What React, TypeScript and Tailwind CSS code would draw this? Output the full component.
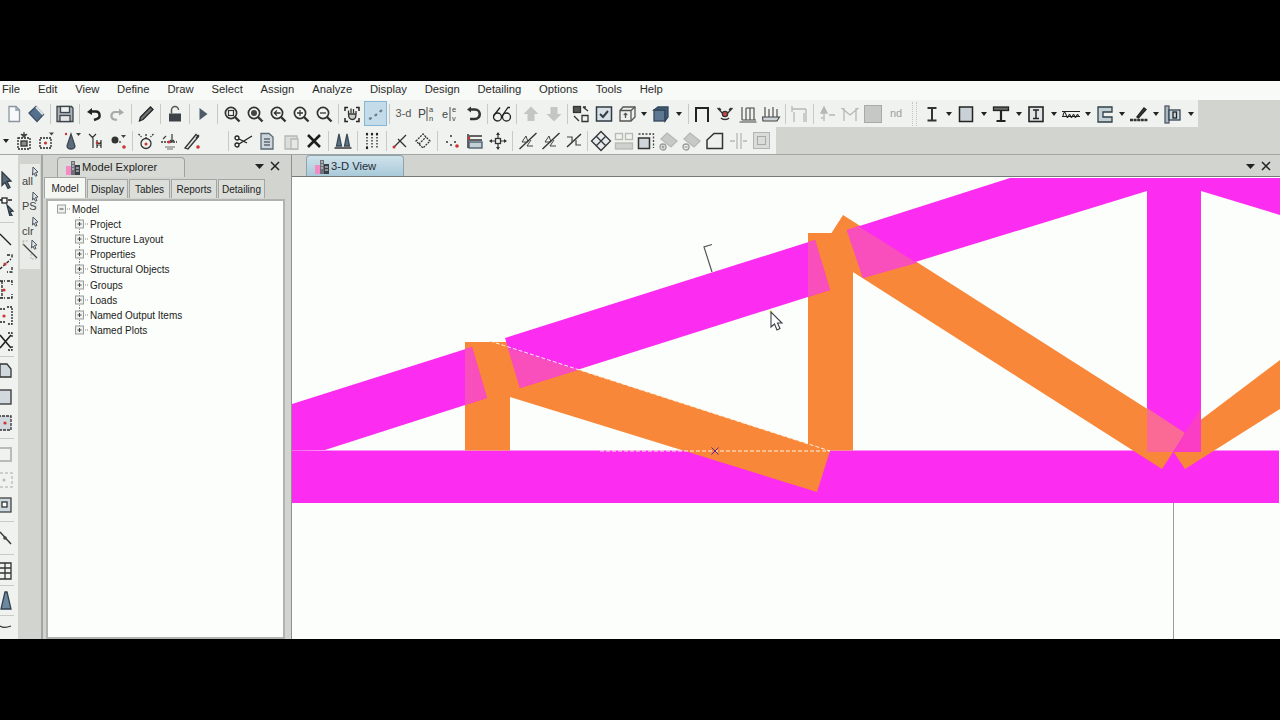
import React from "react";

const F = "font-['Liberation_Sans',Arial,sans-serif]";

const I = ({ children, w = 20, h = 20 }: { children: React.ReactNode; w?: number; h?: number }) => (
  <svg width={w} height={h} viewBox={`0 0 ${w} ${h}`} fill="none" stroke="#333" strokeWidth="1.3" className="block shrink-0">
    {children}
  </svg>
);

const Cell = ({ w, children }: { w: string; children?: React.ReactNode }) => (
  <span className={"flex h-full shrink-0 items-center justify-center " + w}>{children}</span>
);
const Sep = ({ w }: { w: string }) => (
  <span className={"flex h-full shrink-0 items-center justify-center " + w}>
    <span className="h-[20px] w-px bg-[#c6c9c4]" />
  </span>
);
const DD = () => (
  <svg width="6" height="4" viewBox="0 0 6 4" className="block">
    <path d="M0 0h6L3 4z" fill="#222" />
  </svg>
);

const Zoom = ({ kind }: { kind: string }) => (
  <I>
    <circle cx="9" cy="9" r="5.6" strokeWidth="1.7" fill="#f4f6f2" />
    <path d="M13 13l4.5 4.5" strokeWidth="2.4" />
    {kind === "win" && <rect x="6.5" y="6.5" width="5" height="5" strokeWidth="1.2" />}
    {kind === "dot" && <circle cx="9" cy="9" r="3" fill="#444" stroke="none" />}
    {kind === "back" && <path d="M12.5 9h-6M9 6.4L6.3 9 9 11.6" strokeWidth="1.3" />}
    {kind === "plus" && <path d="M6 9h6M9 6v6" strokeWidth="1.3" />}
    {kind === "minus" && <path d="M6 9h6" strokeWidth="1.3" />}
  </I>
);

const Gray = "#b5b8b3";

const Row1 = () => (
  <div className="flex h-[27px] w-[1198px] items-center bg-[#eff2ee]">
    <Cell w="w-[3px]" />
    <Cell w="w-[22px]"><I><path d="M5 2.500h7l3.500 3.500v11.500H5z" fill="#f7f8fa" stroke="#8b95a0" /><path d="M12 2.500V6h3.500" stroke="#8b95a0" /></I></Cell>
    <Cell w="w-[22px]"><I><path d="M3 9l7-6.500 7.500 8-6.500 7z" fill="#54708f" stroke="#3d4f63" /><path d="M10 3l7 7.500" stroke="#dfe4e8" strokeWidth="2" /></I></Cell>
    <Sep w="w-[7px]" />
    <Cell w="w-[22px]"><I w={20}><path d="M2 2.500h14.500L18 4v13.500H2z" fill="#a9b2b8" stroke="#3d444a" /><rect x="5.500" y="2.500" width="9" height="6" fill="#eef0f0" stroke="#3d444a" /><rect x="5" y="11.500" width="10" height="6" fill="#e4e6e6" stroke="#3d444a" /></I></Cell>
    <Sep w="w-[7px]" />
    <Cell w="w-[22px]"><I><path d="M6 7.500h6a3.800 3.800 0 0 1 1 7.400L10 16" stroke="#222" strokeWidth="2.400" /><path d="M3 8l5-4v7z" fill="#222" stroke="none" /></I></Cell>
    <Cell w="w-[23px]"><I><path d="M14 8H8a3.800 3.800 0 0 0-1 7.400l3 .600" stroke="#a8aca8" strokeWidth="2.200" /><path d="M17 8.500l-5-4v7z" fill="#a8aca8" stroke="none" /></I></Cell>
    <Sep w="w-[7px]" />
    <Cell w="w-[22px]"><I><path d="M3.500 17l1-4L14.500 3l2.500 2.500-10 10z" fill="#6d7478" stroke="#222" /></I></Cell>
    <Sep w="w-[7px]" />
    <Cell w="w-[22px]"><I><rect x="4" y="9.500" width="12" height="8" fill="#3c4247" stroke="none" /><path d="M6.500 9.500V6a3.500 3.500 0 0 1 7 0" strokeWidth="1.500" stroke="#555" /></I></Cell>
    <Sep w="w-[6px]" />
    <Cell w="w-[22px]"><I><path d="M6.500 4l8 6-8 6z" fill="#4f5c68" stroke="none" /></I></Cell>
    <Sep w="w-[7px]" />
    <Cell w="w-[22px]"><Zoom kind="win" /></Cell>
    <Cell w="w-[23px]"><Zoom kind="dot" /></Cell>
    <Cell w="w-[23px]"><Zoom kind="back" /></Cell>
    <Cell w="w-[23px]"><Zoom kind="plus" /></Cell>
    <Cell w="w-[23px]"><Zoom kind="minus" /></Cell>
    <Sep w="w-[6px]" />
    <Cell w="w-[22px]"><I><path d="M3 7V3.500h3M17 7V3.500h-3M3 14v3.500h3M17 14v3.500h-3" strokeWidth="1.500" stroke="#222" /><path d="M6.500 10V6.500M9 9V4.500M11.500 9V5M14 10V7M6.500 10c0 4 2 5.500 4 5.500s3.500-2 3.500-5.500z" fill="#c9ccc8" strokeWidth="1.300" /></I></Cell>
    <Cell w="w-[1px]" />
    <Cell w="w-[23px]">
      <span className="flex h-[25px] w-[23px] items-center justify-center border border-[#86b7d6] bg-[#c4dbea]">
        <I><path d="M3 14.500c1.500-1.500 3-1 2.500 0s-2 1.500-2.500 0zM8.500 11c1.500-1.500 3-1 2.500 0s-2 1.500-2.500 0zM13.500 7c1.500-1.500 3-1 2.500 0s-2 1.500-2.500 0z" fill="#6a7d88" stroke="#6a7d88" strokeWidth="1" /></I>
      </span>
    </Cell>
    <Sep w="w-[5px]" />
    <Cell w="w-[23px]"><span className="text-[11px] text-[#555]">3-d</span></Cell>
    <Cell w="w-[24px]"><I><text x="1" y="14" fontSize="12" fill="#444" stroke="none">P</text><path d="M10 3v14" strokeWidth="1" stroke="#555" /><text x="12" y="8" fontSize="7.500" fill="#444" stroke="none">a</text><text x="12" y="17" fontSize="7.500" fill="#444" stroke="none">n</text></I></Cell>
    <Cell w="w-[23px]"><I><text x="1" y="14" fontSize="11" fill="#444" stroke="none">e</text><path d="M9 3v14" strokeWidth="1" stroke="#555" /><text x="11" y="8" fontSize="7.500" fill="#444" stroke="none">e</text><text x="11" y="17" fontSize="7.500" fill="#444" stroke="none">v</text></I></Cell>
    <Cell w="w-[23px]"><I><path d="M6 5.500h5a4.700 4.700 0 1 1 0 9.500H6" strokeWidth="2.600" stroke="#333" /><path d="M3 5.500l4-3v6z" fill="#333" stroke="none" /></I></Cell>
    <Sep w="w-[5px]" />
    <Cell w="w-[23px]"><I><circle cx="5.500" cy="13" r="4" stroke="#222" /><circle cx="14.500" cy="13" r="4" stroke="#222" /><path d="M1.500 12L8 3.500M10 12l6-8.500h2" stroke="#222" /></I></Cell>
    <Sep w="w-[7px]" />
    <Cell w="w-[22px]"><I><path d="M10 2.500l7.500 7.500H13.500v7h-7v-7H2.500z" fill="#c3c6c2" stroke="none" /></I></Cell>
    <Cell w="w-[23px]"><I><path d="M10 17.500L2.500 10H6.500V3h7v7h4z" fill="#c3c6c2" stroke="none" /></I></Cell>
    <Sep w="w-[5px]" />
    <Cell w="w-[22px]"><I><rect x="2.500" y="2.500" width="7" height="6" fill="#555" stroke="#333" /><path d="M12 3l5 4M12 3h3M3 12l5 5M11 11.500h6v6h-6z" /></I></Cell>
    <Cell w="w-[24px]"><I><rect x="2.500" y="3" width="15" height="14" fill="#d8e0e6" stroke="#2e3a44" strokeWidth="1.500" /><path d="M6 10l3 3 5-6" strokeWidth="2" stroke="#2e3a44" /></I></Cell>
    <Cell w="w-[22px]"><I><path d="M3 6.500L6 3h12v10l-4 4H3z" fill="#eef0ee" stroke="#555" /><path d="M3 6.500h11V17M14 6.500L18 3M8.500 14V9.500M6.800 11l1.700-1.700 1.700 1.700" stroke="#555" /></I></Cell>
    <Cell w="w-[12px]"><DD /></Cell>
    <Cell w="w-[22px]"><I><rect x="3" y="6" width="11" height="11" fill="#5c7892" stroke="#34475a" /><path d="M3 6l4-3h10v10l-3 4V6z" fill="#3f5c78" stroke="#34475a" /></I></Cell>
    <Cell w="w-[14px]"><DD /></Cell>
    <Sep w="w-[5px]" />
    <Cell w="w-[22px]"><I><path d="M4 18V4h12v14" strokeWidth="2" stroke="#222" /></I></Cell>
    <Cell w="w-[23px]"><I><path d="M2.500 4L10 12l7.500-8M4 4l2 2M16 4l-2 2" stroke="#333" /><circle cx="10" cy="10" r="2.600" fill="#c64a4a" stroke="#333" /><path d="M6 14c1.500 2 6.500 2 8 0" /></I></Cell>
    <Cell w="w-[23px]"><I><path d="M4 3v13M4 16h14M8 4h8v12M8 4v12M12 4v12M1.500 18h17" stroke="#444" strokeWidth="1.100" /></I></Cell>
    <Cell w="w-[23px]"><I><path d="M4 3v10M8 5v8M12 3v10M16 5v8M1.500 13h17L16 17H2z" stroke="#444" strokeWidth="1.100" fill="#cdd4da" /></I></Cell>
    <Sep w="w-[6px]" />
    <Cell w="w-[22px]"><I><path d="M3 5h14M3 2v6M17 5v13M5 8v10M15 9v9" stroke={Gray} /></I></Cell>
    <Sep w="w-[6px]" />
    <Cell w="w-[22px]"><I><path d="M7 3l3 6H4zM7 9v8" stroke={Gray} fill={Gray} /><path d="M12 11h6M4 14h2" stroke={Gray} /></I></Cell>
    <Cell w="w-[23px]"><I><path d="M1.500 4l8.500 7 8.500-7M4 4v13M16 4v13" stroke={Gray} /></I></Cell>
    <Cell w="w-[24px]"><span className="h-[18px] w-[18px] border border-[#a8aaa7] bg-[#c5c8c4]" /></Cell>
    <Cell w="w-[22px]"><span className="text-[11px] text-[#9c9f9b]">nd</span></Cell>
    <Cell w="w-[14px]"><span className="h-[24px] w-[5px] border-x border-dotted border-[#c4c6c2]" /></Cell>
    <Cell w="w-[22px]"><I><path d="M5.500 4h9M5.500 16.500h9M10 4v12.500" stroke="#333" strokeWidth="2" /></I></Cell>
    <Cell w="w-[12px]"><DD /></Cell>
    <Cell w="w-[22px]"><I><rect x="3.500" y="3" width="13" height="14.500" fill="#c9d1d6" stroke="#222" strokeWidth="1.500" /></I></Cell>
    <Cell w="w-[13px]"><DD /></Cell>
    <Cell w="w-[22px]"><I><rect x="2.500" y="3" width="15" height="3.500" fill="#666" stroke="#222" /><path d="M10 6.500v10M5.500 17h9" strokeWidth="2.200" stroke="#222" /></I></Cell>
    <Cell w="w-[13px]"><DD /></Cell>
    <Cell w="w-[22px]"><I><rect x="3" y="3" width="14" height="14.500" fill="#dfe4e6" stroke="#222" strokeWidth="1.600" /><path d="M7 6h6M7 14.500h6M10 6v8.500" strokeWidth="1.500" stroke="#222" /></I></Cell>
    <Cell w="w-[13px]"><DD /></Cell>
    <Cell w="w-[22px]"><I><path d="M1 7.500h18M1 12.500h18M2 12c1-5 2-5 3.500 0s2.500-5 4 0 2.500-5 4 0 2.500-5 4 0" strokeWidth="1.100" stroke="#222" /></I></Cell>
    <Cell w="w-[11px]"><DD /></Cell>
    <Cell w="w-[23px]"><I><path d="M3 3h14v5h-9v5h9v5H3z" fill="#c4d0d4" stroke="#2c4048" strokeWidth="1.300" /></I></Cell>
    <Cell w="w-[12px]"><DD /></Cell>
    <Cell w="w-[21px]"><I><path d="M8 13L15 4l2 1.500L9.500 14z" fill="#444" stroke="#222" /><path d="M1 16h18" strokeWidth="2.400" stroke="#333" strokeDasharray="3 .6" /></I></Cell>
    <Cell w="w-[13px]"><DD /></Cell>
    <Cell w="w-[22px]"><I><rect x="2" y="2" width="4" height="17" fill="#a8b8c0" stroke="#556" /><rect x="6" y="6" width="11" height="10" fill="#c9d6dc" stroke="#345" /><rect x="10" y="8" width="3.500" height="6" stroke="#222" /></I></Cell>
    <Cell w="w-[13px]"><DD /></Cell>
  </div>
);

const Row2 = () => (
  <div className="flex h-[27px] w-[776px] items-center bg-[#eff2ee]">
    <Cell w="w-[12px]"><DD /></Cell>
    <Cell w="w-[23px]"><I><rect x="4" y="7" width="12" height="11" stroke="#222" strokeDasharray="2 1" /><rect x="7" y="10" width="6" height="5" fill="#8a8f8a" stroke="#333" /><path d="M10 1v3M7 3l3 3 3-3" fill="#444" stroke="#444" /></I></Cell>
    <Cell w="w-[24px]"><I><rect x="3" y="7" width="11" height="10" strokeDasharray="2 1" stroke="#222" /><circle cx="8.500" cy="12" r="1.600" fill="#c33" stroke="none" /><path d="M12 1.500l2.500 3 2.500-3z" fill="#444" stroke="none" /></I></Cell>
    <Cell w="w-[25px]"><I><path d="M9 3L5 15a4 3 0 0 0 8 0z" fill="#5c6c7c" stroke="#3c4650" /><path d="M14 2l2.500 3 2.500-3z" fill="#444" stroke="none" /><circle cx="4" cy="3" r="1.200" fill="#c33" stroke="none" /></I></Cell>
    <Cell w="w-[23px]"><I><path d="M3 3l4 4M10 3l-4 4M7 7v10M11 9v8M15 9v8M11 11l4 4M15 11l-4 4" stroke="#333" strokeWidth="1.200" /><circle cx="11" cy="12" r="1.300" fill="#c33" stroke="none" /></I></Cell>
    <Cell w="w-[23px]"><I><circle cx="6" cy="9" r="3.500" fill="#333" stroke="none" /><path d="M12 4l2.500 3L17 4z" fill="#444" stroke="none" /><circle cx="15" cy="16" r="1.800" fill="#c33" stroke="none" /><circle cx="11" cy="11" r="1" fill="#555" stroke="none" /></I></Cell>
    <Sep w="w-[5px]" />
    <Cell w="w-[22px]"><I><circle cx="10" cy="12.500" r="5" stroke="#333" /><circle cx="10" cy="13" r="1.500" fill="#c33" stroke="none" /><path d="M2.500 3l3 3M17.500 3l-3 3M10 3v5" stroke="#333" strokeDasharray="2 1" /></I></Cell>
    <Cell w="w-[24px]"><I><path d="M2 11h16" strokeDasharray="2 1" stroke="#333" /><path d="M4 8l3-3M13 3v8M11 9l2 2 2-2" stroke="#444" /><circle cx="10" cy="11" r="1.500" fill="#c33" stroke="none" /><path d="M6 16h10M8 18h6" stroke="#999" /></I></Cell>
    <Cell w="w-[22px]"><I><path d="M3 17L14 3.500l2.500 2L6 18z" fill="#dfe3e6" stroke="#333" /><circle cx="16" cy="16" r="1.800" fill="#c33" stroke="none" /><path d="M14 7l3-3" stroke="#333" /></I></Cell>
    <Cell w="w-[22px]" />
    <Sep w="w-[7px]" />
    <Cell w="w-[22px]"><I><circle cx="4" cy="14" r="2" stroke="#222" /><circle cx="4" cy="7" r="2" stroke="#222" /><path d="M6 13L19 5M6 8l8 4" stroke="#222" /></I></Cell>
    <Cell w="w-[25px]"><I><path d="M4 2.500h8l4 3.500v12H4z" fill="#ced6dc" stroke="#5b6a75" /><path d="M7 8h6M7 11h6M7 14h6" stroke="#5b6a75" /></I></Cell>
    <Cell w="w-[24px]"><I><path d="M4 5h12v13H4z" fill="#dcdedb" stroke={Gray} /><path d="M10 8h7v10h-7z" fill="#e6e8e5" stroke={Gray} /></I></Cell>
    <Cell w="w-[22px]"><I><path d="M4 4l12 12M16 4L4 16" strokeWidth="2.600" stroke="#1d1d1d" /></I></Cell>
    <Sep w="w-[7px]" />
    <Cell w="w-[22px]"><I><path d="M6 3L3.500 15h5zM14 3l-2.500 12h5z" fill="#5d7486" stroke="#3a4a56" /><path d="M1.500 17h17" stroke="#333" strokeWidth="1.500" /></I></Cell>
    <Sep w="w-[6px]" />
    <Cell w="w-[23px]"><I><path d="M5 3v14M10 3v14M15 3v14" strokeDasharray="1.500 1.500" stroke="#222" /><circle cx="5" cy="3" r="1.200" fill="#222" stroke="none" /><circle cx="5" cy="17" r="1.200" fill="#222" stroke="none" /><circle cx="10" cy="3" r="1.200" fill="#222" stroke="none" /><circle cx="15" cy="3" r="1.200" fill="#222" stroke="none" /></I></Cell>
    <Sep w="w-[6px]" />
    <Cell w="w-[22px]"><I><path d="M4 16L16 4M16 16L8 8" stroke="#333" /><circle cx="4" cy="16" r="1.500" fill="#c33" stroke="none" /></I></Cell>
    <Cell w="w-[24px]"><I><path d="M3 10l7-7 7 7-7 7zM6 13l7-7" stroke="#333" strokeDasharray="2 1" /></I></Cell>
    <Sep w="w-[5px]" />
    <Cell w="w-[23px]"><I><circle cx="9" cy="5" r="1" fill="#333" stroke="none" /><circle cx="5" cy="11" r="1" fill="#333" stroke="none" /><circle cx="13" cy="11" r="1" fill="#333" stroke="none" /><circle cx="15" cy="15" r="1.800" fill="#c33" stroke="none" /><circle cx="9" cy="14" r="1" fill="#333" stroke="none" /></I></Cell>
    <Cell w="w-[23px]"><I><path d="M3 3v14" stroke="#333" strokeWidth="1.500" /><circle cx="4" cy="7" r="1.300" fill="#c33" stroke="none" /><path d="M4 5h13M4 9h13" stroke="#333" /><rect x="4" y="11" width="13" height="6" fill="#c5d0d6" stroke="#456" /></I></Cell>
    <Cell w="w-[23px]"><I><path d="M10 2v16M2 10h16" stroke="#333" strokeWidth="1.200" /><rect x="7.500" y="7.500" width="5" height="5" fill="#eff2ee" stroke="#333" /><path d="M10 1l2 3H8zM10 19l2-3H8zM1 10l3-2v4zM19 10l-3-2v4z" fill="#333" stroke="none" /></I></Cell>
    <Sep w="w-[7px]" />
    <Cell w="w-[23px]"><I><path d="M1.500 18L18.500 2" stroke="#333" /><path d="M8 5l-4 6h6zM13 9l-4 6h6" stroke="#444" strokeWidth="1" /></I></Cell>
    <Cell w="w-[23px]"><I><path d="M1.500 18L18.500 2" stroke="#333" /><path d="M8 5l-4 6h6zM13 9l-4 6h6" stroke="#444" strokeWidth="1" /></I></Cell>
    <Cell w="w-[23px]"><I><path d="M3 16L17 3" stroke="#333" strokeWidth="1.500" /><path d="M3 6h5v5M17 14h-5V9" stroke="#444" strokeWidth="1.200" /></I></Cell>
    <Sep w="w-[4px]" />
    <Cell w="w-[23px]"><I w={22} h={22}><path d="M11 1.500L20.500 11 11 20.500 1.500 11zM6 6l10 10M16 6L6 16" stroke="#333" fill="#e4eaee" /></I></Cell>
    <Cell w="w-[23px]"><I><rect x="1.500" y="2.500" width="7" height="6" stroke={Gray} /><rect x="11.500" y="2.500" width="7" height="6" stroke={Gray} /><rect x="1.500" y="12" width="17" height="6" stroke={Gray} fill="#ced1cd" /></I></Cell>
    <Cell w="w-[22px]"><I><rect x="2.500" y="7" width="11" height="10.500" fill="#cfd5d8" stroke="#333" strokeWidth="1.500" /><path d="M2.500 3h15v14" stroke="#444" strokeDasharray="2 1.500" /></I></Cell>
    <Cell w="w-[23px]"><I><path d="M8 2l10 8-6 6-10-8z" fill="#c6c9c5" stroke={Gray} /><circle cx="4" cy="16" r="3" fill="#eff2ee" stroke="#9a9d99" /><path d="M2.500 16h3M4 14.500v3" stroke="#9a9d99" /></I></Cell>
    <Cell w="w-[23px]"><I><path d="M8 2l10 8-6 6-10-8z" fill="#c6c9c5" stroke={Gray} /><circle cx="4" cy="16" r="3" fill="#eff2ee" stroke="#9a9d99" /><path d="M2.500 16h3" stroke="#9a9d99" /></I></Cell>
    <Cell w="w-[23px]"><I><path d="M2 9l7-6.500h8.500v15H2z" fill="#eef0ee" stroke="#333" strokeWidth="1.500" /></I></Cell>
    <Cell w="w-[23px]"><I><path d="M9 2v16M13 2v16M2 10h5M15 10h4" stroke={Gray} /></I></Cell>
    <Cell w="w-[24px]"><span className="flex h-[17px] w-[17px] items-center justify-center border border-[#b1b4b0] bg-[#d9dcd8]"><span className="h-[9px] w-[9px] border border-[#a6a9a5]" /></span></Cell>
  </div>
);

const menus = ["File", "Edit", "View", "Define", "Draw", "Select", "Assign", "Analyze", "Display", "Design", "Detailing", "Options", "Tools", "Help"];
const tree = ["Project", "Structure Layout", "Properties", "Structural Objects", "Groups", "Loads", "Named Output Items", "Named Plots"];

const BuildIcon = () => (
  <svg width="15" height="15" viewBox="0 0 15 15" className="block shrink-0">
    <rect x="0" y="6" width="5" height="9" fill="#f48bc4" />
    <rect x="5" y="1" width="4" height="14" fill="#6b7079" />
    <rect x="9" y="5" width="5" height="10" fill="#3c4048" />
    <path d="M6 3h2M6 6h2M6 9h2M10 8h3M10 11h3" stroke="#e8e8e8" strokeWidth="1" />
  </svg>
);
const Close = () => (
  <svg width="10" height="10" viewBox="0 0 10 10" className="block"><path d="M1 1l8 8M9 1L1 9" stroke="#222" strokeWidth="1.500" /></svg>
);
const Tri = () => (
  <svg width="9" height="5" viewBox="0 0 9 5" className="block"><path d="M0 0h9L4.500 5z" fill="#222" /></svg>
);

const SI = ({ children, h = "h-[25px]" }: { children: React.ReactNode; h?: string }) => (
  <div className={"flex w-full shrink-0 items-center overflow-hidden " + h}>
    <svg width="18" height="20" viewBox="0 0 18 20" fill="none" stroke="#333" strokeWidth="1.300" className="block shrink-0">{children}</svg>
  </div>
);
const HSep = ({ m }: { m: string }) => <div className={"h-px w-[14px] shrink-0 bg-[#c8cbc6] " + m} />;

const LeftStrip = () => (
  <div className="flex h-full w-[18px] shrink-0 flex-col overflow-hidden bg-[#eff2ee] pt-[13px]">
    <SI><path d="M2 1l9 9-4 .500 3 6-2 1-3-6-3 3z" fill="#5a6a7a" stroke="#2f3a44" /></SI>
    <SI><path d="M0 4h2M8 4h4" stroke="#222" /><rect x="2" y="2" width="5" height="5" stroke="#222" fill="#fff" /><path d="M7 9l6 6-3 .500 2 4-2 1z" fill="#5a6a7a" stroke="#2f3a44" /></SI>
    <HSep m="my-[4px]" />
    <SI h="h-[23px]"><path d="M0 5l11 11" stroke="#222" /></SI>
    <SI h="h-[27px]"><path d="M7 1h5v4M12 13v5H7M0 15l11-10" stroke="#222" strokeDasharray="3 1.500" /><circle cx="5" cy="10" r="1.600" fill="#c33" stroke="none" /></SI>
    <SI h="h-[26px]"><path d="M0 1h5M0 18h5M2 1v17M7 1h5v4M7 18h5v-4" stroke="#222" strokeDasharray="3 1" /><circle cx="4" cy="10" r="1.600" fill="#c33" stroke="none" /></SI>
    <SI h="h-[26px]"><path d="M7 1h5v17H7M0 3h5M0 16h5" stroke="#222" strokeDasharray="2 1" /><circle cx="4" cy="10" r="1.600" fill="#c33" stroke="none" /></SI>
    <SI h="h-[26px]"><path d="M0 3l11 13M11 3L0 16" stroke="#222" strokeWidth="1.600" /><path d="M8 1h4v4M8 18h4v-4" stroke="#222" strokeDasharray="2 1" /></SI>
    <HSep m="my-[1px]" />
    <SI h="h-[26px]"><path d="M0 3h7l4 5v8H0z" fill="#d2d9de" stroke="#333" /></SI>
    <SI h="h-[26px]"><rect x="-2" y="3" width="13" height="14" fill="#d2d9de" stroke="#333" /></SI>
    <SI h="h-[25px]"><rect x="-2" y="3" width="13" height="14" fill="#d2d9de" stroke="#333" strokeDasharray="3 1" /><circle cx="5" cy="10" r="1.600" fill="#c33" stroke="none" /></SI>
    <HSep m="my-[3px]" />
    <SI h="h-[26px]"><path d="M0 3h11v13H0" stroke="#b8bbb6" strokeWidth="2" /></SI>
    <SI h="h-[24px]"><path d="M0 3h12v14H0" stroke="#c0c3be" strokeDasharray="3 2" strokeWidth="1.500" /><circle cx="4" cy="10" r="1.500" fill="#b8bbb6" stroke="none" /></SI>
    <SI h="h-[26px]"><rect x="-2" y="3" width="13" height="14" fill="#cdd7de" stroke="#444" /><rect x="2" y="7" width="5" height="5" fill="#fff" stroke="#333" /></SI>
    <HSep m="my-[3px]" />
    <SI h="h-[27px]"><path d="M0 3l11 12" stroke="#333" strokeWidth="1.400" /><circle cx="5" cy="9" r="1.800" fill="#444" stroke="none" /></SI>
    <HSep m="my-[2px]" />
    <SI h="h-[27px]"><path d="M0 2h11v16H0M0 7h11M0 12h11M5 2v16" stroke="#333" /></SI>
    <HSep m="my-[1px]" />
    <SI h="h-[27px]"><path d="M5 1L1 18h10L7 1z" fill="#6b8aa0" stroke="#33424f" /></SI>
    <HSep m="my-[1px]" />
    <SI h="h-[20px]"><path d="M0 9c3 2 6 2 11 0" stroke="#333" /></SI>
  </div>
);

const Cur = () => <path d="M11 1l5 5-2.500 .500 1.500 3-1.500 .700-1.500-3-1.500 2z" fill="#dfe3e6" stroke="#4a5560" strokeWidth="1" />;

const Strip2 = () => (
  <div className="mt-[9px] flex h-[105px] w-[20px] flex-col items-center bg-[#e8ebe6]">
    {["all", "PS", "clr"].map((t) => (
      <div key={t} className="relative h-[25px] w-full pt-[9px]">
        <span className="block pl-[2px] text-[11px] leading-[16px] text-[#444]">{t}</span>
        <svg width="18" height="14" viewBox="0 0 18 14" fill="none" className="absolute left-[2px] top-[2px]"><Cur /></svg>
      </div>
    ))}
    <svg width="18" height="22" viewBox="0 0 18 22" fill="none" className="block">
      <path d="M2 5l14 14" stroke="#444" strokeWidth="1.300" />
      <path d="M2 2h6M2 2v6M10 15v5h5" stroke="#aaa" strokeDasharray="1.500 1.500" />
      <Cur />
    </svg>
  </div>
);

const Tree = () => (
  <div className="flex-1 border-2 border-[#b0b3af] bg-[#fbfefa] pt-[0.600px]">
    <div className="flex h-[15.200px] items-center pl-[9px]">
      <svg width="15" height="15" viewBox="0 0 15 15" className="block shrink-0">
        <rect x="0.500" y="3" width="8" height="8" fill="#eef0ee" stroke="#9a9d99" />
        <path d="M2.500 7h4" stroke="#444" />
        <path d="M10 7h4" stroke="#888" strokeDasharray="1 1" />
      </svg>
      <span className="text-[10px] text-[#222]">Model</span>
    </div>
    {tree.map((t, i) => (
      <div key={t} className="flex h-[15.200px] items-center pl-[27px]">
        <svg width="15" height="15" viewBox="0 0 15 15" className="block shrink-0">
          <path d={i === tree.length - 1 ? "M4.500 0v3" : "M4.500 0v15"} stroke="#888" strokeDasharray="1 1" />
          <rect x="0.500" y="3" width="8" height="8" fill="#eef0ee" stroke="#9a9d99" />
          <path d="M2.500 7h4M4.500 5v4" stroke="#444" />
          <path d="M10 7h4" stroke="#888" strokeDasharray="1 1" />
        </svg>
        <span className="text-[10px] text-[#222]">{t}</span>
      </div>
    ))}
  </div>
);

const Drawing = () => {
  const M = "#fc2df1";
  const O = "#f9873a";
  const P = "#f94fbc";
  return (
    <svg width="988" height="462" viewBox="292 177 988 462" className="block">
      <path d="M1173.500 503V639" stroke="#9a9d99" strokeWidth="1" />
      <rect x="292" y="450.500" width="987" height="52.500" fill={M} />
      <rect x="465" y="342" width="45" height="108.500" fill={O} />
      <rect x="808" y="233" width="45" height="217.500" fill={O} />
      <polygon points="490,341 830,451 817,492 510,397 480,380" fill={O} />
      <polygon points="843,215 1185,433 1173,452 1162,469 820,251" fill={O} />
      <polygon points="1280,360 1186,431 1173,451 1185,469 1280,409" fill={O} />
      <polygon points="292,404 472,347 487,398 325,450 292,450.500" fill={M} />
      <polygon points="465,349 472,347 487,398 465,405" fill={P} />
      <polygon points="505,338 815,240 830,290 520,388" fill={M} />
      <polygon points="508,348 578,370 520,388" fill={P} />
      <polygon points="808,242 815,240 830,290 808,297" fill={P} />
      <polygon points="847,230 1010,178 1280,178 1280,215 1201,191 1147,191 863,278" fill={M} />
      <polygon points="847,231 858,226 917,263 863,278" fill={P} />
      <rect x="1147" y="178" width="54" height="274" fill={M} />
      <polygon points="1147,408 1185,433 1173,452 1147,452" fill="#fb6a94" />
      <polygon points="1201,408 1186,431 1174,452 1201,452" fill="#fb3cc4" />
      <path d="M490 341L830 451" stroke="#fff3e0" strokeWidth="1" strokeDasharray="4 2" />
      <path d="M600 451H830" stroke="#fff3e0" strokeWidth="1" strokeDasharray="4 2" />
      <path d="M711.500 447.500l7 7M718.500 447.500l-7 7" stroke="#5b2a8c" strokeWidth="1" />
      <path d="M712 244.500l-8 2.500 8 25" fill="none" stroke="#555" strokeWidth="1.200" />
      <circle cx="771" cy="312" r="1.500" fill="#e6e64a" />
      <path d="M771 312v15l3.500-3 2.500 6 3-1.500-2.500-5.500h4.500z" fill="#fbfefa" stroke="#3b4048" strokeWidth="1.100" />
    </svg>
  );
};

export default function App() {
  return (
    <div className={"flex h-[720px] w-[1280px] flex-col overflow-hidden bg-black " + F}>
      <div className="h-[81px] shrink-0" />
      <div className="flex h-[558px] shrink-0 flex-col bg-[#d1d4cf]">
        <div className="flex h-[19px] shrink-0 items-center gap-[17.800px] bg-[#f7faf6] pb-[2px] pl-[2px] text-[11.250px] text-[#2b2b2b]">
          {menus.map((m) => <span key={m}>{m}</span>)}
        </div>
        <Row1 />
        <Row2 />
        <div className="flex min-h-0 flex-1 border-t border-[#a3a5a1]">
          <LeftStrip />
          <div className="flex w-[23px] shrink-0 flex-col pl-[2px]">
            <Strip2 />
          </div>
          <div className="w-[2px] shrink-0 bg-[#a3a5a1]" />
          <div className="flex w-[248px] shrink-0 flex-col pl-[1px] pr-[6px]">
            <div className="flex h-[22px] shrink-0 items-end pl-[13px]">
              <div className="flex h-[20px] w-[128px] items-center gap-[1px] rounded-t-[4px] border border-b-0 border-[#9fa29e] bg-[#d7dad5] pl-[8px] pr-2">
                <BuildIcon />
                <span className="text-[11.200px] text-[#1f1f1f]">Model Explorer</span>
              </div>
              <div className="flex-1" />
              <div className="mb-[6px] mr-[5px] flex items-center gap-[6px]"><Tri /><Close /></div>
            </div>
            <div className="flex h-[22px] shrink-0 items-end gap-[1px] pb-[1px] text-[10px] text-[#222]">
              <span className="flex h-[21px] w-[42px] items-center justify-center border border-b-0 border-[#a3a6a2] bg-[#f5f7f3]">Model</span>
              <span className="flex h-[19px] w-[41px] items-center justify-center border border-b-0 border-[#a3a6a2] bg-[#dbded9]">Display</span>
              <span className="flex h-[19px] w-[41px] items-center justify-center border border-b-0 border-[#a3a6a2] bg-[#dbded9]">Tables</span>
              <span className="flex h-[19px] w-[46px] items-center justify-center border border-b-0 border-[#a3a6a2] bg-[#dbded9]">Reports</span>
              <span className="flex h-[19px] w-[47px] items-center justify-center border border-b-0 border-[#a3a6a2] bg-[#dbded9]">Detailing</span>
            </div>
            <div className="flex min-h-0 flex-1 pl-[2px]"><Tree /></div>
          </div>
          <div className="w-[1px] shrink-0 bg-[#8f918d]" />
          <div className="flex min-w-0 flex-1 flex-col">
            <div className="flex h-[22px] shrink-0 items-end border-b border-[#77797a] pl-[14px]">
              <div className="flex h-[21px] w-[98px] items-center gap-[1px] rounded-t-[4px] border border-b-0 border-[#8ea2ae] bg-gradient-to-b from-[#cfe2ea] to-[#a9cad9] pl-[8px] pt-[1px]">
                <BuildIcon />
                <span className="text-[11.200px] text-[#1f2c36]">3-D View</span>
              </div>
              <div className="flex-1" />
              <div className="mb-[5px] mr-[9px] flex items-center gap-[6px]"><Tri /><Close /></div>
            </div>
            <div className="min-h-0 flex-1 overflow-hidden bg-[#fbfefa]"><Drawing /></div>
          </div>
        </div>
      </div>
    </div>
  );
}
